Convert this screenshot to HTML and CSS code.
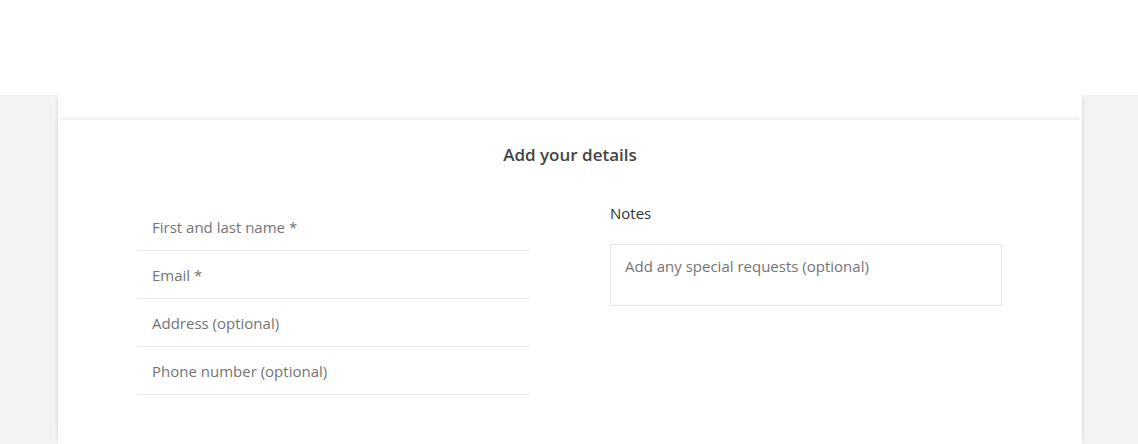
FILE: index.html
```html
<!DOCTYPE html>
<html lang="en">
<head>
    <meta charset="UTF-8">
    <meta name="viewport" content="width=device-width, initial-scale=1.0">
    <title>Checkout - Details</title>
    <link rel="stylesheet" href="styles.css">
</head>
<body>
    <header class="topbar"></header>

    <main class="page">
        <div class="card">
            <div class="card-top"></div>

            <section class="details">
                <h2 class="details-title">Add your details</h2>

                <form class="details-form">
                    <div class="fields">
                        <input class="field" type="text" placeholder="First and last name *" />
                        <input class="field" type="email" placeholder="Email *" />
                        <input class="field" type="text" placeholder="Address (optional)" />
                        <input class="field" type="tel" placeholder="Phone number (optional)" />
                    </div>
                    <div class="notes">
                        <label class="notes-label" for="notes">Notes</label>
                        <textarea id="notes" class="notes-input" placeholder="Add any special requests (optional)"></textarea>
                    </div>
                </form>
            </section>
        </div>
    </main>
</body>
</html>
```

FILE: styles.css
```css
body {
    margin: 0;
    font-family: "Open Sans", "Noto Sans", Arial, sans-serif;
    background-color: #f3f3f3;
    color: #333;
}
.topbar {
    height: 95px;
    background-color: #fff;
}
.page {
    display: flex;
    justify-content: center;
    padding-left: 2px;
}
.card {
    width: 1024px;
    min-height: 349px;
    background-color: #fff;
    /* side shadows only, the top blends into the header */
    box-shadow: -3px 0 4px -3px rgba(0, 0, 0, 0.14), 3px 0 4px -3px rgba(0, 0, 0, 0.14);
}
.card-top {
    height: 25px;
}
.details {
    padding: 23px 80px 40px;
    box-shadow: 0 -3px 5px -2px rgba(0, 0, 0, 0.11);
}
.details-title {
    margin: 0;
    text-align: center;
    font-size: 17px;
    font-weight: 600;
    color: #444;
}
.details-form {
    display: flex;
    gap: 80px;
    margin-top: 37px;
}
.fields {
    flex: 1;
    display: flex;
    flex-direction: column;
}
.field {
    box-sizing: border-box;
    height: 48px;
    padding: 0 14px;
    border: none;
    border-bottom: 1px solid #e6e6e6;
    font-family: inherit;
    font-size: 15px;
    color: #333;
    outline: none;
}
.field::placeholder,
.notes-input::placeholder {
    color: #747474;
}
.notes {
    flex: 1;
    display: flex;
    flex-direction: column;
}
.notes-label {
    font-size: 15px;
    color: #333;
    line-height: 21px;
}
.notes-input {
    margin-top: 20px;
    height: 62px;
    box-sizing: border-box;
    padding: 11px 14px;
    border: 1px solid #e6e6e6;
    font-family: inherit;
    font-size: 15px;
    resize: none;
    outline: none;
}
```
